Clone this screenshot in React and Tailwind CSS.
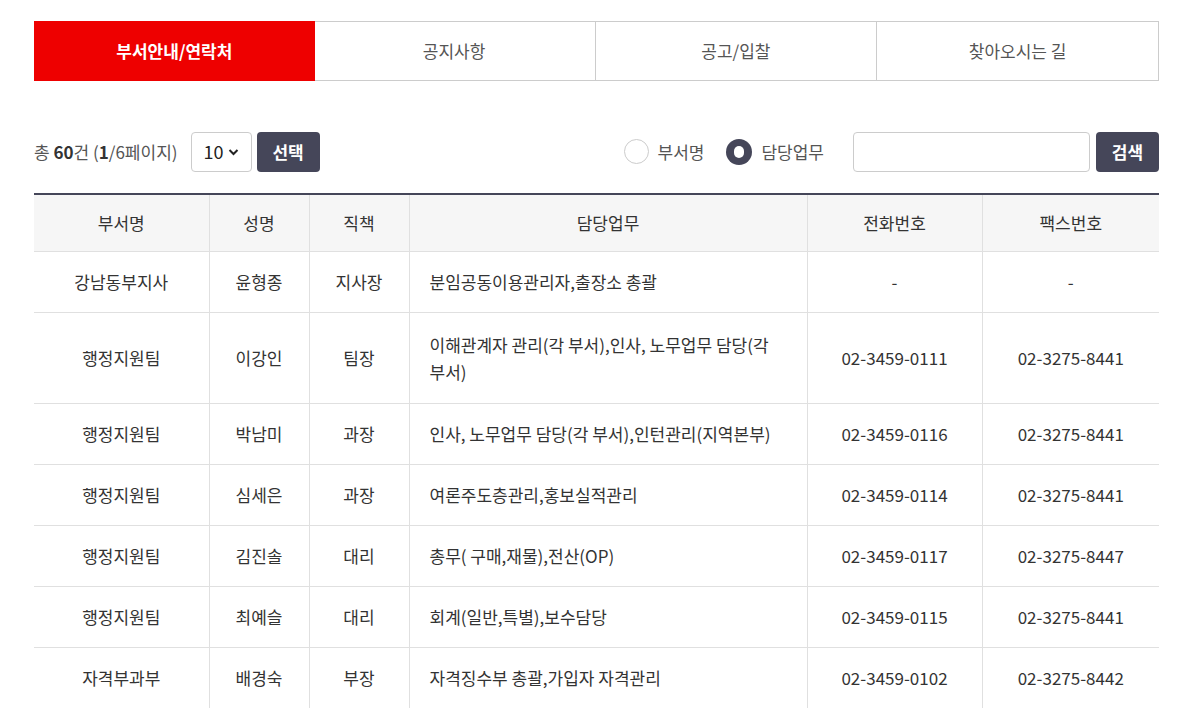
import React from "react";

const rows = [
  ["강남동부지사","윤형종","지사장","분임공동이용관리자,출장소 총괄","-","-"],
  ["행정지원팀","이강인","팀장","이해관계자 관리(각 부서),인사, 노무업무 담당(각 부서)","02-3459-0111","02-3275-8441",true],
  ["행정지원팀","박남미","과장","인사, 노무업무 담당(각 부서),인턴관리(지역본부)","02-3459-0116","02-3275-8441"],
  ["행정지원팀","심세은","과장","여론주도층관리,홍보실적관리","02-3459-0114","02-3275-8441"],
  ["행정지원팀","김진솔","대리","총무( 구매,재물),전산(OP)","02-3459-0117","02-3275-8447"],
  ["행정지원팀","최예슬","대리","회계(일반,특별),보수담당","02-3459-0115","02-3275-8441"],
  ["자격부과부","배경숙","부장","자격징수부 총괄,가입자 자격관리","02-3459-0102","02-3275-8442"],
];

export default function App() {
  const tabs = ["부서안내/연락처","공지사항","공고/입찰","찾아오시는 길"];
  return (
    <div className="w-[1196px] h-[708px] overflow-hidden bg-white text-[#333]" style={{fontFamily:'"Noto Sans CJK KR","Noto Sans",sans-serif'}}>
      <div className="ml-[34px] w-[1125px] pt-[21px]">
        <div className="flex h-[60px] border border-[#ccc]">
          {tabs.map((t,i)=>(
            <div key={t} className={`flex-1 flex items-center justify-center text-[17px] ${i===0?"bg-[#ee0000] text-white font-bold -m-px":"text-[#555]"} ${i>1?"border-l border-[#ccc]":""}`}>{t}</div>
          ))}
        </div>
        <div className="mt-[50px] flex items-center h-[41px] text-[17px]">
          <span className="text-[#555]">총 <b className="text-[#333] font-bold">60</b>건 (<b className="font-bold text-[#333]">1</b>/6페이지)</span>
          <div className="ml-[13px] w-[61px] h-[40px] border border-[#ccc] rounded-[4px] flex items-center justify-center gap-1 text-[#222] text-[18px]">10<svg width="11" height="8" viewBox="0 0 11 8"><path d="M1.5 2l4 4 4-4" stroke="#222" strokeWidth="2" fill="none"/></svg></div>
          <div className="ml-[5px] w-[63px] h-[40px] rounded-[4px] bg-[#454659] text-white font-bold flex items-center justify-center">선택</div>
          <div className="ml-auto flex items-center text-[#555]">
            <span className="w-[25px] h-[25px] rounded-full border border-[#ccc]"></span>
            <span className="ml-[9px]">부서명</span>
            <span className="ml-[22px] w-[26px] h-[26px] rounded-full bg-[#454659] flex items-center justify-center"><span className="w-[10px] h-[12px] rounded-full bg-white"></span></span>
            <span className="ml-[9px]">담당업무</span>
            <div className="ml-[29px] w-[237px] h-[40px] border border-[#ccc] rounded-[4px]"></div>
            <div className="ml-[6px] w-[63px] h-[40px] rounded-[4px] bg-[#454659] text-white font-bold flex items-center justify-center">검색</div>
          </div>
        </div>
        <table className="mt-[21px] w-full border-t-2 border-[#454659] border-collapse table-fixed text-[17px]">
          <colgroup><col className="w-[175px]"/><col className="w-[100px]"/><col className="w-[100px]"/><col className="w-[398px]"/><col className="w-[175px]"/><col/></colgroup>
          <thead>
            <tr className="h-[57px] bg-[#f6f6f6]">
              {["부서명","성명","직책","담당업무","전화번호","팩스번호"].map((h,i)=>(
                <th key={h} className={`font-normal border-b border-[#e0e0e0] ${i>0?"border-l":""}`}>{h}</th>
              ))}
            </tr>
          </thead>
          <tbody>
            {rows.map((r,ri)=>(
              <tr key={ri} className={r[6]?"h-[91px]":"h-[61px]"}>
                {r.slice(0,6).map((c,i)=>(
                  <td key={i} className={`border-b border-[#e0e0e0] ${i>0?"border-l":""} ${i===3?"text-left px-[20px] leading-[27px]":"text-center"}`}>{c}</td>
                ))}
              </tr>
            ))}
          </tbody>
        </table>
      </div>
    </div>
  );
}
